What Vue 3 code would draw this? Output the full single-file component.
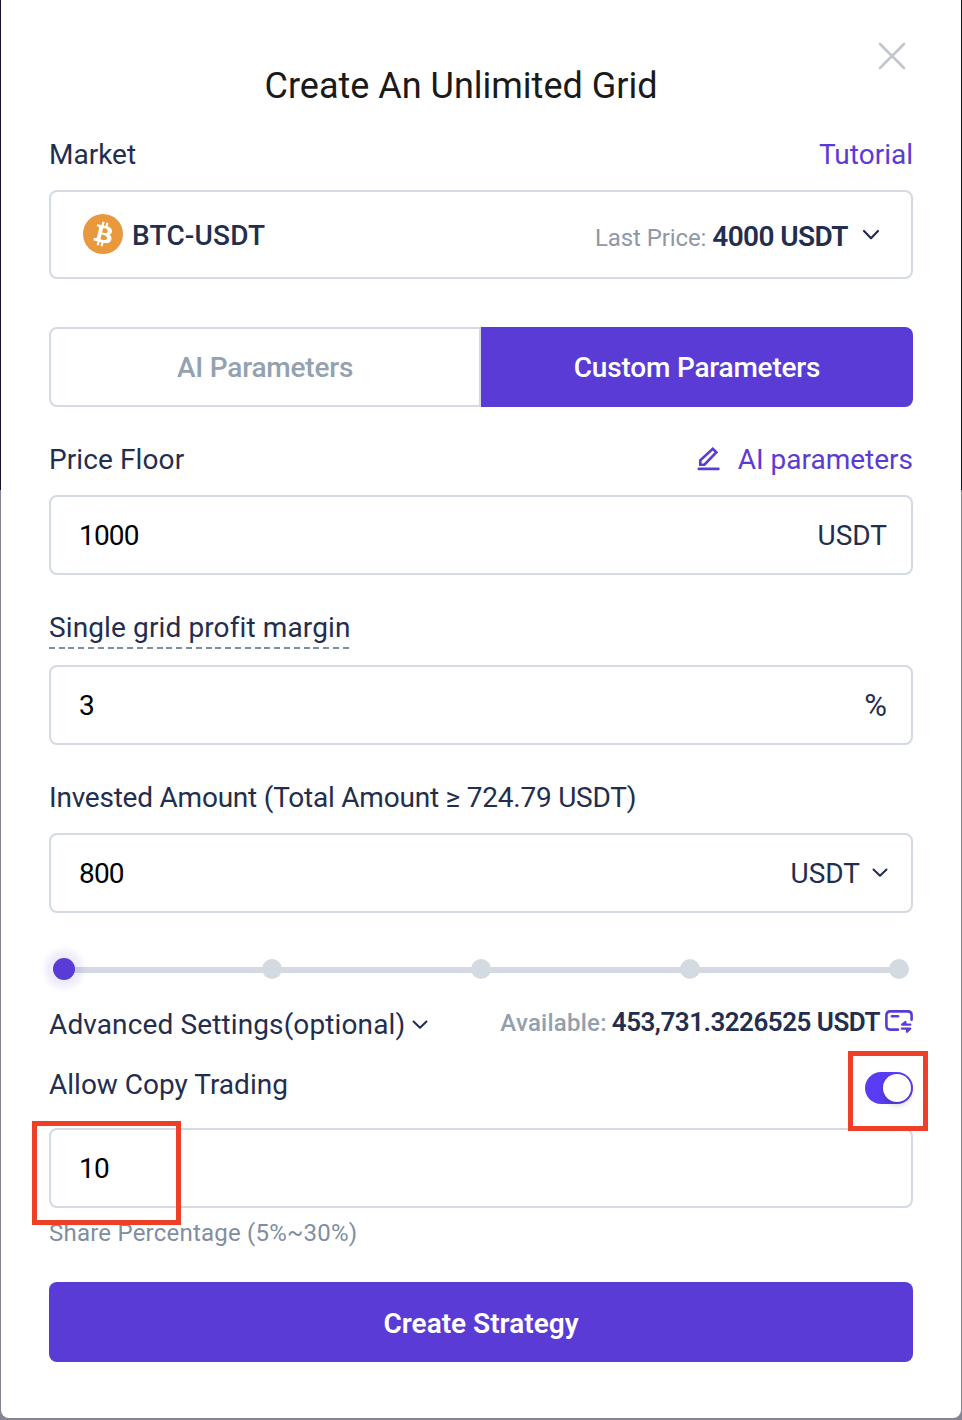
<template>
  <div class="backdrop">
    <div class="modal">
      <button class="close" aria-label="Close">
        <svg width="28" height="28" viewBox="0 0 28 28">
          <path d="M2 2L26 26M26 2L2 26" />
        </svg>
      </button>
      <h1 class="title">Create An Unlimited Grid</h1>

      <div class="row market-row">
        <span>Market</span>
        <a class="link">Tutorial</a>
      </div>
      <div class="market">
        <svg class="coin" width="40" height="40" viewBox="0 0 32 32">
          <circle cx="16" cy="16" r="16" fill="#e9983d" />
          <path
            fill="#fff"
            d="M23.189 14.02c.314-2.096-1.283-3.223-3.465-3.975l.708-2.84-1.728-.43-.69 2.765c-.454-.114-.92-.22-1.385-.326l.695-2.783L15.596 6l-.708 2.839c-.376-.086-.746-.17-1.104-.26l.002-.009-2.384-.595-.46 1.846s1.283.294 1.256.312c.7.175.826.638.805 1.006l-.806 3.235c.048.012.11.03.18.057l-.183-.045-1.13 4.532c-.086.212-.303.531-.793.41.018.025-1.256-.313-1.256-.313l-.858 1.978 2.25.561c.418.105.828.215 1.231.318l-.715 2.872 1.727.43.708-2.84c.472.127.93.245 1.378.357l-.706 2.828 1.728.43.715-2.866c2.948.558 5.164.333 6.097-2.333.752-2.146-.037-3.385-1.588-4.192 1.13-.26 1.98-1.003 2.207-2.538zm-3.95 5.538c-.533 2.147-4.148.986-5.32.695l.95-3.805c1.172.293 4.929.872 4.37 3.11zm.535-5.569c-.487 1.953-3.495.96-4.47.717l.86-3.45c.975.243 4.118.696 3.61 2.733z"
          />
        </svg>
        <span class="pair">BTC-USDT</span>
        <span class="last">Last Price:</span>
        <span class="price">4000 USDT</span>
        <svg class="chevron" width="18" height="12" viewBox="0 0 18 12">
          <path d="M2 2L9 9.3L16 2" />
        </svg>
      </div>

      <div class="tabs">
        <button
          v-for="tab in tabs"
          :key="tab"
          class="tab"
          :class="{ active: tab === activeTab }"
          @click="activeTab = tab"
        >
          {{ tab }}
        </button>
      </div>

      <div class="row floor-row">
        <span class="floor">Price Floor</span>
        <a class="link ai-link">
          <svg width="24" height="26" viewBox="0 0 24 26">
            <path d="M3.3 17.7V13.4L15.8 1.8L19.4 5.2L7.4 17.7Z" />
            <path d="M1.8 21.9H21.4" />
          </svg>
          <span>AI parameters</span>
        </a>
      </div>
      <div class="field">
        <input v-model="priceFloor" />
        <span class="unit">USDT</span>
      </div>

      <div class="row margin-row">
        <span class="dashed">Single grid profit margin</span>
      </div>
      <div class="field">
        <input v-model="profitMargin" />
        <span class="unit percent">%</span>
      </div>

      <div class="row invest-row">
        <span class="invest">Invested Amount (Total Amount ≥ 724.79 USDT)</span>
      </div>
      <div class="field">
        <input v-model="amount" />
        <span class="unit">USDT</span>
        <svg class="chevron small" width="16" height="12" viewBox="0 0 16 12">
          <path d="M1.5 2.5L8 8.8L14.5 2.5" />
        </svg>
      </div>

      <div class="slider">
        <i
          v-for="step in 5"
          :key="step"
          class="dot"
          :class="{ current: step - 1 === sliderStep }"
          @click="sliderStep = step - 1"
        ></i>
      </div>

      <div class="row advanced-row">
        <span class="advanced">Advanced Settings(optional)</span>
        <svg class="chevron small" width="16" height="12" viewBox="0 0 16 12">
          <path d="M1.5 2.5L8 8.8L14.5 2.5" />
        </svg>
        <span class="available">Available:</span>
        <span class="balance">453,731.3226525 USDT</span>
        <svg class="transfer" width="28" height="24" viewBox="0 0 28 24">
          <path d="M13 19.6H5.2Q1.4 19.6 1.4 15.8V5.2Q1.4 1.4 5.2 1.4H22.8Q26.6 1.4 26.6 5.2V9.8" />
          <path d="M7 6.2H13" />
          <path class="arrow" d="M25.4 14.6H17L20.4 12V14.6" />
          <path class="arrow" d="M16.8 18.6H25.2L22 21.8V18.6" />
        </svg>
      </div>

      <div class="row copy-row">
        <span class="copy">Allow Copy Trading</span>
        <div class="switch" :class="{ on: copyTrading }" @click="copyTrading = !copyTrading">
          <i class="knob"></i>
          <div class="mark mark-switch"></div>
        </div>
      </div>
      <div class="field share">
        <input v-model="share" />
        <div class="mark mark-share"></div>
      </div>
      <p class="hint">Share Percentage (5%~30%)</p>

      <button class="submit">Create Strategy</button>
    </div>
  </div>
</template>

<script setup>
import { ref } from 'vue'

const tabs = ['AI Parameters', 'Custom Parameters']
const activeTab = ref('Custom Parameters')

const priceFloor = ref('1000')
const profitMargin = ref('3')
const amount = ref('800')
const share = ref('10')

const sliderStep = ref(0)
const copyTrading = ref(true)
</script>

<style>
body {
  margin: 0;
}
</style>

<style scoped>
.backdrop {
  box-sizing: border-box;
  height: 1420px;
  padding: 0 1px 2px;
  background: linear-gradient(#10122f 490px, #858494 490px);
  font-family: Roboto, "Liberation Sans", sans-serif;
  font-size: 28px;
  color: #232e4f;
}

.modal {
  position: relative;
  box-sizing: border-box;
  height: 1418px;
  padding: 66px 48px 0;
  background: #fff;
  border-radius: 0 0 8px 8px;
}

button {
  padding: 0;
  border: 0;
  background: none;
  font: inherit;
  cursor: pointer;
}

svg {
  flex: none;
  fill: none;
  stroke-linecap: round;
  stroke-linejoin: round;
}

.close {
  position: absolute;
  top: 42px;
  right: 55px;
  width: 28px;
  height: 28px;
}

.close svg {
  display: block;
  stroke: #c1c7cc;
  stroke-width: 2.6;
}

.title {
  margin: 0 40px 0 0;
  font-size: 36px;
  font-weight: 400;
  line-height: 40px;
  text-align: center;
  color: #1a1a1a;
}

.row {
  display: flex;
  align-items: center;
  height: 40px;
  line-height: 40px;
  white-space: nowrap;
}

.market-row,
.floor-row {
  justify-content: space-between;
}

.market-row {
  margin: 29px 0 15px;
}

.link {
  color: #5b3bd6;
}

.market {
  display: flex;
  align-items: center;
  box-sizing: border-box;
  height: 89px;
  padding: 0 31px 0 32px;
  border: 2px solid #d4dae4;
  border-radius: 8px;
  white-space: nowrap;
}

.coin {
  margin: -1px 9px 0 0;
}

.pair {
  flex: 1;
  padding-top: 2px;
  font-weight: 500;
  letter-spacing: 0.2px;
}

.last {
  margin: 7px 6px 0 0;
  font-size: 24px;
  letter-spacing: -0.1px;
  color: #9197a7;
}

.price {
  padding-top: 4px;
  margin-right: 14px;
  font-weight: 600;
  letter-spacing: -0.6px;
}

.chevron {
  stroke: #232e4f;
  stroke-width: 2.2;
}

.chevron.small {
  stroke-width: 2;
}

.tabs {
  display: flex;
  height: 80px;
  margin-top: 48px;
}

.tab {
  box-sizing: border-box;
  width: 50%;
  border: 2px solid #d4dae4;
  border-radius: 8px 0 0 8px;
  font-weight: 500;
  letter-spacing: -0.2px;
  color: #93a1b0;
}

.tab.active {
  border: 0;
  border-radius: 0 8px 8px 0;
  background: #5b3bd6;
  color: #fff;
}

.floor-row {
  margin: 33px 0 15px;
}

.floor {
  letter-spacing: 0.1px;
}

.ai-link {
  display: flex;
  align-items: center;
}

.ai-link svg {
  margin-right: 17px;
  stroke: #5b3bd6;
  stroke-width: 2.6;
  stroke-linejoin: miter;
}

.field {
  position: relative;
  display: flex;
  align-items: center;
  box-sizing: border-box;
  height: 80px;
  padding: 0 24px 0 28px;
  border: 2px solid #d4dae4;
  border-radius: 8px;
}

.field input {
  flex: 1;
  min-width: 0;
  padding: 0;
  border: 0;
  outline: 0;
  background: none;
  font: inherit;
  letter-spacing: -0.8px;
  color: #000;
}

.percent {
  font-size: 31px;
}

.field .chevron {
  margin: 0 -1px 0 12px;
}

.margin-row {
  margin: 33px 0 17px;
}

.dashed {
  height: 41px;
  letter-spacing: 0.12px;
  background: repeating-linear-gradient(90deg, #7f8fa3 0 6px, transparent 6px 9.8px) bottom / 100% 2px no-repeat;
}

.invest-row {
  margin: 33px 0 15px;
}

.invest {
  letter-spacing: -0.22px;
}

.slider {
  display: flex;
  align-items: center;
  justify-content: space-between;
  height: 22px;
  margin: 45px 4px 0;
  background: linear-gradient(#d4dae2, #d4dae2) center 9px / calc(100% - 20px) 6px no-repeat;
}

.dot {
  width: 20px;
  height: 20px;
  border-radius: 50%;
  background: #d4dae2;
}

.dot.current {
  width: 22px;
  height: 22px;
  margin-right: -2px;
  background: #5b3bd6;
  box-shadow: 0 0 6px 8px rgba(91, 59, 214, 0.1);
}

.advanced-row {
  margin-top: 25px;
}

.advanced {
  letter-spacing: 0.12px;
}

.advanced-row .chevron {
  margin-left: 7px;
}

.available {
  margin: -5px 5px 0 auto;
  font-size: 24px;
  font-weight: 500;
  letter-spacing: 0.25px;
  color: #91a0ae;
}

.balance {
  margin-top: -6px;
  font-size: 26px;
  font-weight: 600;
  letter-spacing: -0.5px;
}

.transfer {
  margin: -6px 0 0 5px;
  stroke: #5b3bd6;
  stroke-width: 2.6;
}

.transfer .arrow {
  fill: #5b3bd6;
  stroke-width: 2.2;
}

.copy-row {
  justify-content: space-between;
  margin: 20px 0 23px;
}

.switch {
  position: relative;
  z-index: 1;
  display: flex;
  box-sizing: border-box;
  width: 48px;
  height: 32px;
  margin-top: 6px;
  padding: 2px;
  border-radius: 16px;
  background: #d4dae2;
}

.switch.on {
  justify-content: flex-end;
  background: #5b3cf5;
}

.knob {
  width: 28px;
  height: 28px;
  border-radius: 50%;
  background: #fff;
  box-shadow: 0 3px 6px rgba(0, 0, 0, 0.2);
}

/* red callout frames */
.mark {
  position: absolute;
  box-sizing: border-box;
  border: 5px solid #ee4026;
  pointer-events: none;
}

.mark-switch {
  top: -21px;
  left: -17px;
  width: 80px;
  height: 80px;
}

.mark-share {
  top: -9px;
  left: -19px;
  width: 149px;
  height: 104px;
}

.hint {
  margin: 10px 0 34px;
  font-size: 24px;
  letter-spacing: 0.22px;
  line-height: 30px;
  color: #7f8ea1;
}

.submit {
  display: block;
  width: 100%;
  height: 80px;
  padding-top: 2px;
  border-radius: 8px;
  background: #5b3bd6;
  font-weight: 600;
  color: #fff;
}
</style>
